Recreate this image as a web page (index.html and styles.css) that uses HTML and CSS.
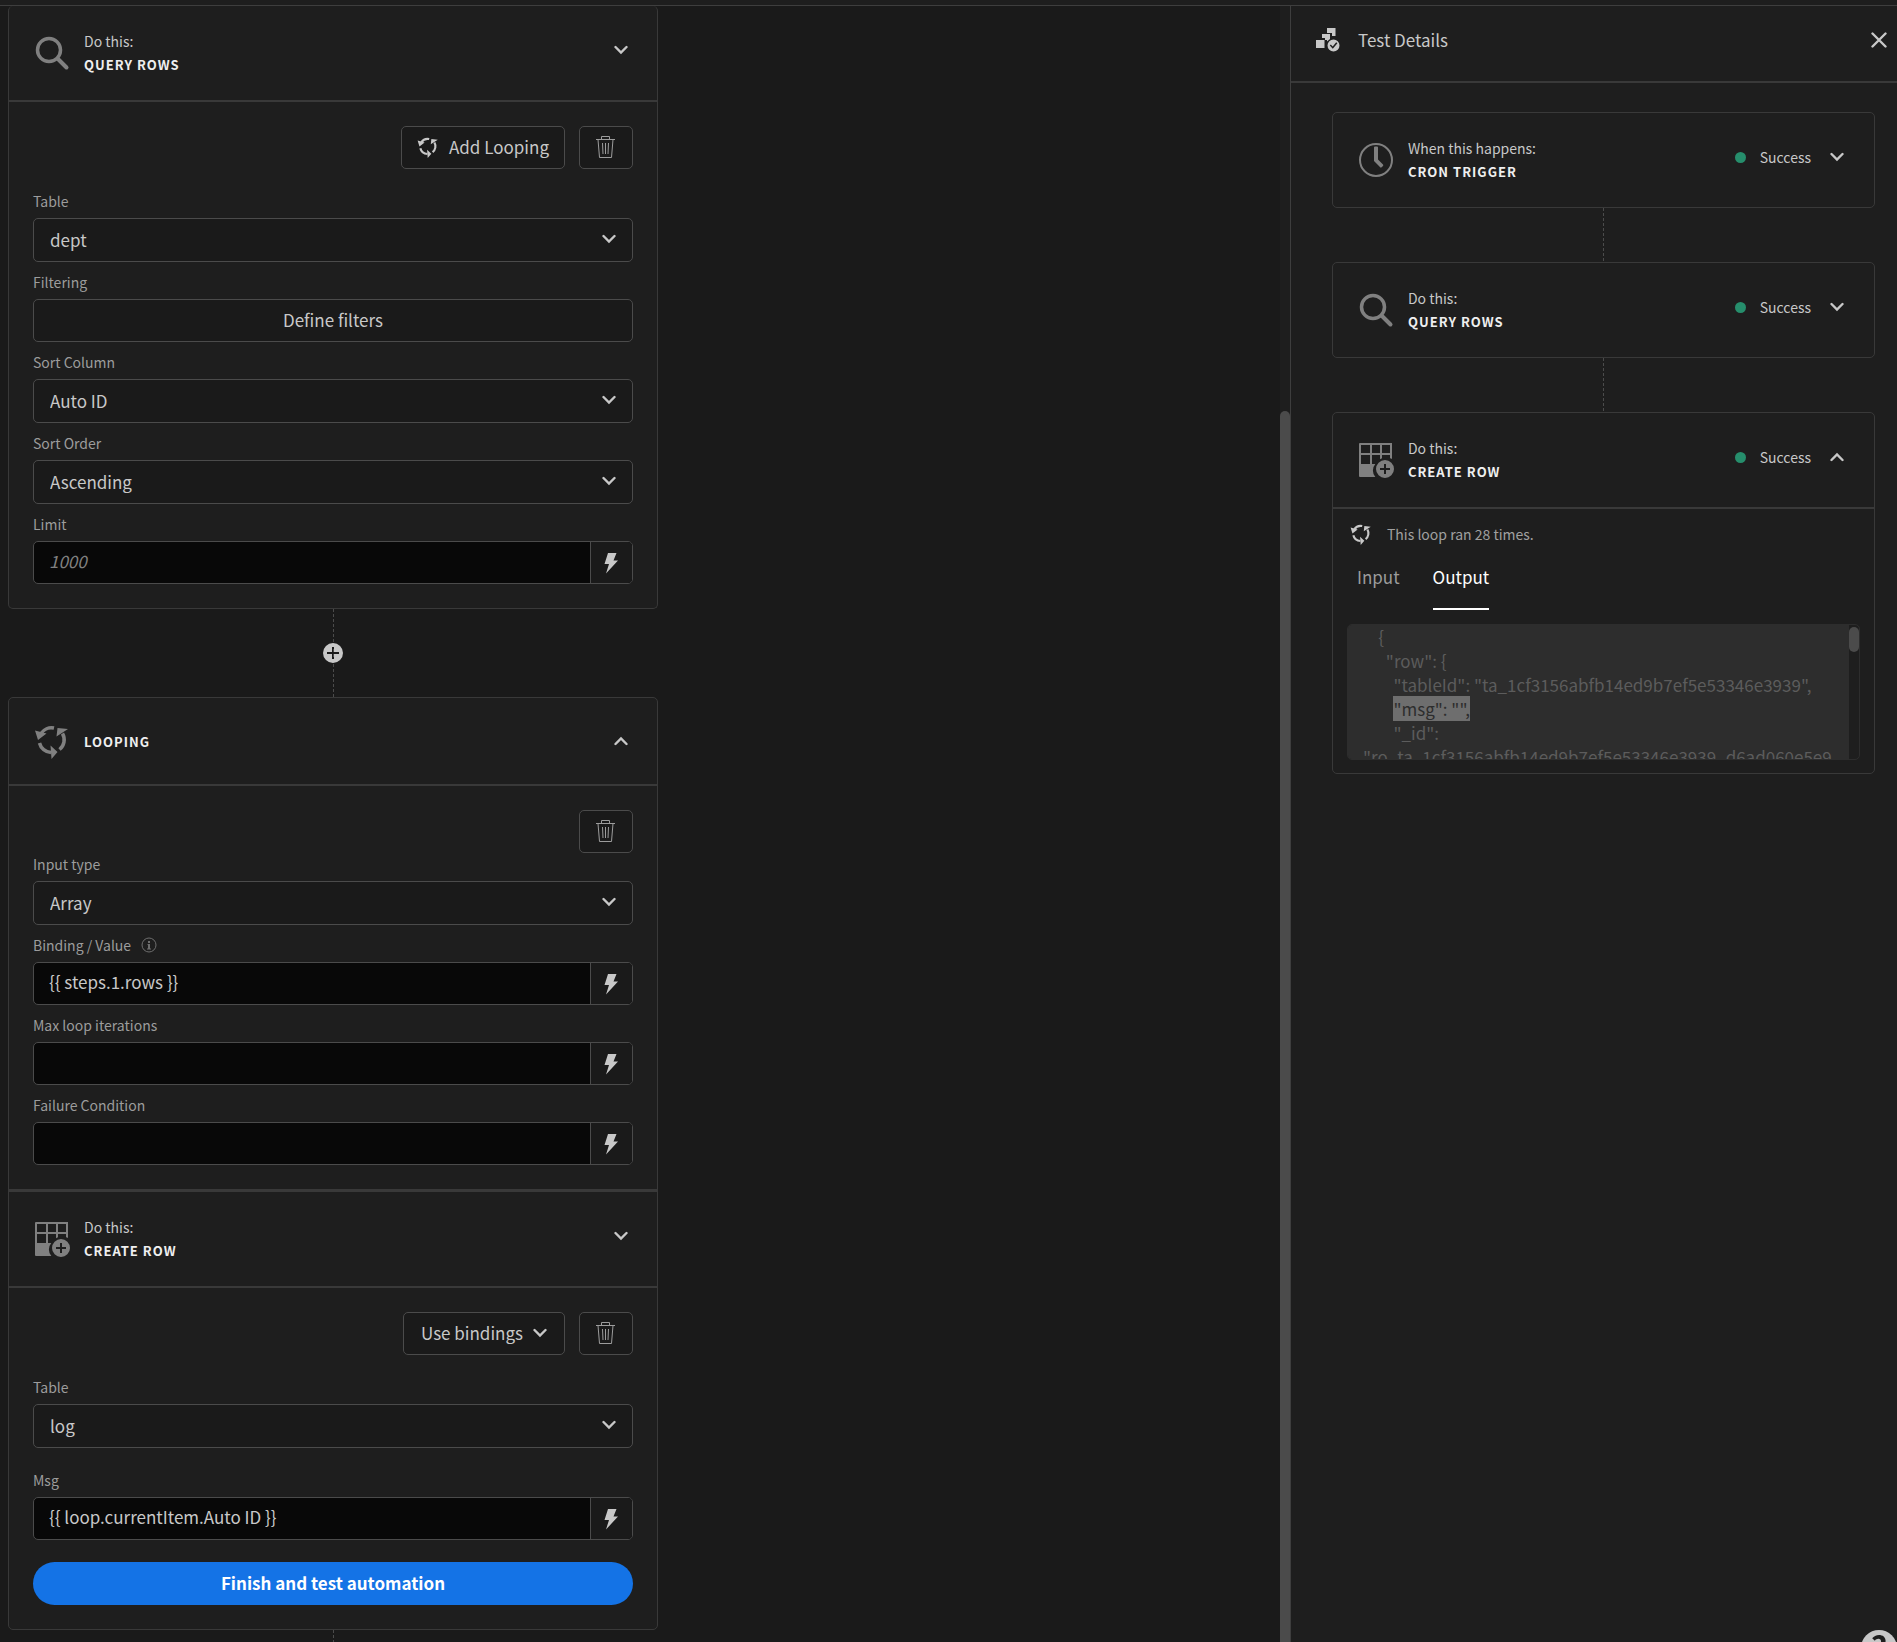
FILE: index.html
```
<!DOCTYPE html>
<html lang="en">
<head>
    <meta charset="UTF-8">
    <meta name="viewport" content="width=device-width, initial-scale=1.0">
    <title>Automation</title>
    <link rel="stylesheet" href="styles.css">
</head>
<body>
    <svg class="sprite" aria-hidden="true">
        <symbol id="icon-search" viewBox="0 0 36 36">
            <circle cx="15" cy="15" r="11.5" class="arc"/>
            <path d="M24 24l8.500 8.500" class="handle"/>
        </symbol>
        <symbol id="icon-loop" viewBox="0 0 36 36">
            <path d="M20 5A12.500 12.500 0 0 0 7 10.500" class="arc"/>
            <path d="M28.500 10.500A12.500 12.500 0 0 1 25.500 26.500" class="arc"/>
            <path d="M5.500 20A12.500 12.500 0 0 0 17 29.500" class="arc"/>
            <path d="M1 7.500L12.500 10.500 4 17zM23.500 5L34 6 22.500 13.500zM16.500 22.500L23.500 29 17.500 36z"/>
        </symbol>
        <symbol id="icon-clock" viewBox="0 0 36 36">
            <circle cx="18" cy="18" r="16" class="thin"/>
            <path d="M16 5.500a1 1 0 0 1 1-1h2a1 1 0 0 1 1 1v12l5 5a1 1 0 0 1 0 1.400l-1.400 1.400a1 1 0 0 1-1.400 0L16 19z"/>
        </symbol>
        <symbol id="icon-table-add" viewBox="0 0 36 36">
            <path fill-rule="evenodd" d="M2 1h32v16a10 10 0 0 0-2-.8V13h-8v3.200a10 10 0 0 0-2 1V13h-8v9h3.300a10 10 0 0 0 0 13H2a1 1 0 0 1-1-1V2a1 1 0 0 1 1-1zM3 3v8h9V3zM14 3v8h8V3zM24 3v8h8V3zM3 13v9h9v-9z"/>
            <path fill-rule="evenodd" d="M27 18a9 9 0 1 0 0 18 9 9 0 0 0 0-18zM26 22h2v4h4v2h-4v4h-2v-4h-4v-2h4z"/>
        </symbol>
        <symbol id="icon-trash" viewBox="0 0 20 24">
            <path d="M0 4.500h19M5.500 4.500V1.500h8v3M2 4.500L3.500 22.500h12L17 4.500M6.500 8l.5 11M9.500 8v11M12.500 8l-.5 11" class="line"/>
        </symbol>
        <symbol id="icon-chevron" viewBox="0 0 14 10">
            <path d="M1.500 2L7 7.500 12.500 2" class="stroke"/>
        </symbol>
        <symbol id="icon-bolt" viewBox="0 0 14 22">
            <path d="M4 1h8.500L9.500 8.500H14L2 21.500 5 12H.5z"/>
        </symbol>
        <symbol id="icon-close" viewBox="0 0 16 16">
            <path d="M1.500 1.500l13 13M14.500 1.500l-13 13" class="stroke"/>
        </symbol>
        <symbol id="icon-info" viewBox="0 0 16 16">
            <circle cx="8" cy="8" r="7" class="line"/>
            <path d="M7 4h2v2H7zM6.500 7H9v4.500h1v1H6v-1h1V8h-.5z"/>
        </symbol>
        <symbol id="icon-add" viewBox="0 0 20 20">
            <path fill-rule="evenodd" d="M10 0a10 10 0 1 0 0 20 10 10 0 0 0 0-20zM9 4h2v5h5v2h-5v5H9v-5H4V9h5z"/>
        </symbol>
        <symbol id="icon-test" viewBox="0 0 24 24">
            <path d="M11 0h8.500v8H16V5h-5zM6 6h8v5l-3 2.500V12H9V10H6zM0 12h8.500v8H0z"/>
            <path fill-rule="evenodd" d="M17.500 11.500a6 6 0 1 0 0 12 6 6 0 0 0 0-12zM13.800 17.500l1-1 1.900 1.900 3.500-4.200 1.200 1-4.600 5.500z"/>
        </symbol>
    </svg>

    <div class="top-bar"></div>
    <div class="layout">
        <main class="canvas">
            <section class="block">
                <header class="block-header">
                    <svg class="block-icon"><use href="#icon-search"/></svg>
                    <div class="block-title">
                        <p>Do this:</p>
                        <h2>Query Rows</h2>
                    </div>
                    <button class="toggle" aria-label="Expand"><svg><use href="#icon-chevron"/></svg></button>
                </header>
                <div class="block-body">
                    <div class="actions">
                        <button class="button"><svg class="loop"><use href="#icon-loop"/></svg>Add Looping</button>
                        <button class="button" aria-label="Delete"><svg class="trash"><use href="#icon-trash"/></svg></button>
                    </div>
                    <div class="field">
                        <label for="query-table">Table</label>
                        <div class="picker">
                            <select id="query-table"><option>dept</option></select>
                            <svg><use href="#icon-chevron"/></svg>
                        </div>
                    </div>
                    <div class="field">
                        <label for="filters">Filtering</label>
                        <button class="button wide" id="filters">Define filters</button>
                    </div>
                    <div class="field">
                        <label for="sort-column">Sort Column</label>
                        <div class="picker">
                            <select id="sort-column"><option>Auto ID</option></select>
                            <svg><use href="#icon-chevron"/></svg>
                        </div>
                    </div>
                    <div class="field">
                        <label for="sort-order">Sort Order</label>
                        <div class="picker">
                            <select id="sort-order"><option>Ascending</option><option>Descending</option></select>
                            <svg><use href="#icon-chevron"/></svg>
                        </div>
                    </div>
                    <div class="field">
                        <label for="limit">Limit</label>
                        <div class="binding">
                            <input type="text" id="limit" placeholder="1000">
                            <button aria-label="Bindings"><svg><use href="#icon-bolt"/></svg></button>
                        </div>
                    </div>
                </div>
            </section>

            <div class="connector">
                <button class="add-step" aria-label="Add step"><svg><use href="#icon-add"/></svg></button>
            </div>

            <section class="block">
                <header class="block-header short">
                    <svg class="block-icon"><use href="#icon-loop"/></svg>
                    <div class="block-title">
                        <h2>Looping</h2>
                    </div>
                    <button class="toggle open" aria-label="Collapse"><svg><use href="#icon-chevron"/></svg></button>
                </header>
                <div class="block-body">
                    <div class="actions tight">
                        <button class="button" aria-label="Delete"><svg class="trash"><use href="#icon-trash"/></svg></button>
                    </div>
                    <div class="field">
                        <label for="input-type">Input type</label>
                        <div class="picker">
                            <select id="input-type"><option>Array</option><option>String</option></select>
                            <svg><use href="#icon-chevron"/></svg>
                        </div>
                    </div>
                    <div class="field">
                        <label for="loop-value">Binding / Value <svg class="info"><use href="#icon-info"/></svg></label>
                        <div class="binding">
                            <input type="text" id="loop-value" value="{{ steps.1.rows }}">
                            <button aria-label="Bindings"><svg><use href="#icon-bolt"/></svg></button>
                        </div>
                    </div>
                    <div class="field">
                        <label for="iterations">Max loop iterations</label>
                        <div class="binding">
                            <input type="text" id="iterations">
                            <button aria-label="Bindings"><svg><use href="#icon-bolt"/></svg></button>
                        </div>
                    </div>
                    <div class="field">
                        <label for="failure">Failure Condition</label>
                        <div class="binding">
                            <input type="text" id="failure">
                            <button aria-label="Bindings"><svg><use href="#icon-bolt"/></svg></button>
                        </div>
                    </div>
                </div>
                <header class="block-header joined">
                    <svg class="block-icon"><use href="#icon-table-add"/></svg>
                    <div class="block-title">
                        <p>Do this:</p>
                        <h2>Create Row</h2>
                    </div>
                    <button class="toggle" aria-label="Expand"><svg><use href="#icon-chevron"/></svg></button>
                </header>
                <div class="block-body">
                    <div class="actions">
                        <button class="button menu">Use bindings<svg class="chevron"><use href="#icon-chevron"/></svg></button>
                        <button class="button" aria-label="Delete"><svg class="trash"><use href="#icon-trash"/></svg></button>
                    </div>
                    <div class="field spaced">
                        <label for="row-table">Table</label>
                        <div class="picker">
                            <select id="row-table"><option>log</option></select>
                            <svg><use href="#icon-chevron"/></svg>
                        </div>
                    </div>
                    <div class="field">
                        <label for="msg">Msg</label>
                        <div class="binding">
                            <input type="text" id="msg" value="{{ loop.currentItem.Auto ID }}">
                            <button aria-label="Bindings"><svg><use href="#icon-bolt"/></svg></button>
                        </div>
                    </div>
                    <button class="finish">Finish and test automation</button>
                </div>
            </section>
            <div class="connector"></div>
        </main>
        <div class="canvas-scroll"><div class="thumb"></div></div>

        <aside class="panel">
            <header class="panel-header">
                <svg class="test"><use href="#icon-test"/></svg>
                <h1>Test Details</h1>
                <button class="close" aria-label="Close"><svg><use href="#icon-close"/></svg></button>
            </header>
            <div class="results">
                <section class="result">
                    <header class="result-header">
                        <svg class="block-icon"><use href="#icon-clock"/></svg>
                        <div class="block-title">
                            <p>When this happens:</p>
                            <h2>Cron Trigger</h2>
                        </div>
                        <span class="status">Success</span>
                        <button class="toggle" aria-label="Expand"><svg><use href="#icon-chevron"/></svg></button>
                    </header>
                </section>
                <div class="link"></div>
                <section class="result">
                    <header class="result-header">
                        <svg class="block-icon"><use href="#icon-search"/></svg>
                        <div class="block-title">
                            <p>Do this:</p>
                            <h2>Query Rows</h2>
                        </div>
                        <span class="status">Success</span>
                        <button class="toggle" aria-label="Expand"><svg><use href="#icon-chevron"/></svg></button>
                    </header>
                </section>
                <div class="link"></div>
                <section class="result">
                    <header class="result-header">
                        <svg class="block-icon"><use href="#icon-table-add"/></svg>
                        <div class="block-title">
                            <p>Do this:</p>
                            <h2>Create Row</h2>
                        </div>
                        <span class="status">Success</span>
                        <button class="toggle open" aria-label="Collapse"><svg><use href="#icon-chevron"/></svg></button>
                    </header>
                    <div class="output">
                        <p class="loop-count"><svg class="loop"><use href="#icon-loop"/></svg>This loop ran 28 times.</p>
                        <div class="tabs" role="tablist">
                            <button role="tab" aria-selected="false">Input</button>
                            <button role="tab" aria-selected="true">Output</button>
                        </div>
                        <div class="json">
                            <textarea id="json-output" aria-label="Output" readonly>
    {
      "row": {
        "tableId": "ta_1cf3156abfb14ed9b7ef5e53346e3939",
        "msg": "",
        "_id": "ro_ta_1cf3156abfb14ed9b7ef5e53346e3939_d6ad060e5e9</textarea>
                            <div class="json-scroll"><div class="thumb"></div></div>
                        </div>
                    </div>
                </section>
            </div>
        </aside>
    </div>
    <button class="help" aria-label="Help">?</button>

    <script>
        const output = document.getElementById("json-output");
        const start = output.value.indexOf('"msg"');

        output.focus();
        output.setSelectionRange(start, start + '"msg": "",'.length);
        output.scrollTop = 0;
    </script>
</body>
</html>
```
FILE: styles.css
```
* {
    box-sizing: border-box;
}

body {
    margin: 0;
    height: 100vh;
    display: flex;
    flex-direction: column;
    overflow: hidden;
    background: #1e1e1e;
    color: #c8c8c8;
    font-family: "Noto Sans CJK SC", "Open Sans", sans-serif;
    font-size: 17px;
    line-height: 24px;
}

h1, h2, p {
    margin: 0;
    font-weight: normal;
}

button, input, select, textarea {
    font: inherit;
    color: inherit;
    margin: 0;
}

button {
    padding: 0;
    border: 0;
    background: none;
    cursor: pointer;
}

svg {
    display: block;
    flex: none;
    fill: currentColor;
}

.sprite {
    position: absolute;
    width: 0;
    height: 0;
}

.arc, .handle, .thin, .line, .stroke {
    fill: none;
    stroke: currentColor;
}

.arc {
    stroke-width: 3.5;
}

.handle {
    stroke-width: 4;
    stroke-linecap: round;
}

.thin {
    stroke-width: 2;
}

.line {
    stroke-width: 1;
}

.stroke {
    stroke-width: 2.4;
    stroke-linecap: round;
}

.top-bar {
    flex: none;
    height: 6px;
    border-bottom: 1px solid #3e3e3e;
}

.layout {
    flex: 1;
    min-height: 0;
    display: flex;
}

.canvas {
    flex: 1;
    min-width: 0;
    overflow: hidden;
    padding: 0 8px;
    background: #1a1a1a;
}

.canvas-scroll {
    flex: none;
    width: 10px;
    padding-top: 405px;
}

.thumb {
    height: 100%;
    border-radius: 5px 5px 0 0;
    background: #4b4b4b;
}

/* Automation blocks */

.block {
    max-width: 650px;
    border: 1px solid #393939;
    border-radius: 5px;
    background: #1e1e1e;
}

.block:first-child {
    border-top: 0;
}

.block-header {
    display: flex;
    align-items: center;
    height: 96px;
    padding: 0 29px 0 25px;
    border-bottom: 2px solid #393939;
}

.block-header.short {
    height: 88px;
}

.block-header.joined {
    height: 99px;
    border-top: 3px solid #393939;
}

.block-icon {
    width: 36px;
    height: 36px;
    color: #808080;
}

.block-title {
    flex: 1;
    padding-left: 14px;
    font-size: 14px;
    line-height: 23px;
}

.block-title h2 {
    color: #efefef;
    font-size: 13px;
    font-weight: bold;
    line-height: 23px;
    letter-spacing: 1px;
    text-transform: uppercase;
}

.toggle {
    padding-bottom: 6px;
}

.block-header.short .toggle {
    padding-bottom: 0;
}

.toggle svg {
    width: 14px;
    height: 10px;
}

.toggle.open svg {
    transform: rotate(180deg);
}

.block-body {
    padding: 24px;
}

.actions {
    display: flex;
    justify-content: flex-end;
    gap: 14px;
    margin-bottom: 24px;
}

.actions.tight {
    margin-bottom: 3px;
}

.button {
    display: flex;
    align-items: center;
    justify-content: center;
    height: 43px;
    padding: 0 15px 2px;
    border: 1px solid #4b4b4b;
    border-radius: 5px;
    background: #1a1a1a;
}

.button.wide {
    width: 100%;
}

.button.menu {
    padding: 0 17px 2px;
}

.loop {
    width: 22px;
    height: 22px;
    margin-right: 10px;
}

.trash {
    width: 22px;
    height: 24px;
    color: #9c9c9c;
}

.chevron {
    width: 14px;
    height: 10px;
    margin-left: 10px;
}

.field {
    margin-bottom: 12px;
}

.field:last-child {
    margin-bottom: 0;
}

.field.spaced {
    margin-bottom: 24px;
}

.field label {
    display: flex;
    align-items: center;
    height: 15px;
    margin-bottom: 10px;
    color: #9c9c9c;
    font-size: 14px;
}

.info {
    width: 16px;
    height: 16px;
    margin-left: 10px;
    color: #6e6e6e;
}

.picker {
    position: relative;
}

.picker select {
    display: block;
    width: 100%;
    height: 44px;
    padding: 0 16px 1px;
    border: 1px solid #4b4b4b;
    border-radius: 5px;
    background: #1a1a1a;
    appearance: none;
}

.picker svg {
    position: absolute;
    right: 17px;
    top: 16px;
    width: 14px;
    height: 10px;
    pointer-events: none;
}

.binding {
    display: flex;
    height: 43px;
    overflow: hidden;
    border: 1px solid #4b4b4b;
    border-radius: 5px;
    background: #080808;
}

.binding input {
    flex: 1;
    min-width: 0;
    padding: 0 15px 3px;
    border: 0;
    background: none;
}

.binding input::placeholder {
    color: #808080;
    font-style: italic;
}

.binding button {
    display: flex;
    align-items: center;
    justify-content: center;
    width: 42px;
    padding-right: 2px;
    border-left: 1px solid #4b4b4b;
    background: #1a1a1a;
}

.binding button svg {
    width: 14px;
    height: 22px;
}

.finish {
    display: block;
    width: 100%;
    height: 43px;
    margin-top: 22px;
    padding-bottom: 2px;
    border-radius: 22px;
    background: #1473e6;
    color: #fff;
    font-weight: bold;
}

.connector {
    display: flex;
    align-items: center;
    justify-content: center;
    max-width: 650px;
    height: 88px;
    background: repeating-linear-gradient(#4b4b4b 0 3px, transparent 3px 5px) center / 1px 100% no-repeat;
}

.add-step svg {
    width: 20px;
    height: 20px;
}

/* Test details */

.panel {
    flex: none;
    width: 32%;
    border-left: 1px solid #3e3e3e;
}

.panel-header {
    display: flex;
    align-items: center;
    height: 77px;
    padding: 0 10px 7px 25px;
    border-bottom: 2px solid #393939;
}

.test {
    width: 24px;
    height: 24px;
}

.panel-header h1 {
    flex: 1;
    padding-left: 18px;
    font-size: 17px;
}

.close svg {
    width: 16px;
    height: 16px;
}

.results {
    padding: 29px 22px 29px 41px;
}

.result {
    border: 1px solid #393939;
    border-radius: 5px;
}

.result-header {
    display: flex;
    align-items: center;
    height: 94px;
    padding: 0 30px 0 25px;
}

.status {
    display: flex;
    align-items: center;
    padding: 0 19px 6px 0;
    font-size: 14px;
}

.status::before {
    content: "";
    width: 11px;
    height: 11px;
    margin-right: 14px;
    border-radius: 50%;
    background: #268e6c;
}

.link {
    height: 54px;
    background: repeating-linear-gradient(#4b4b4b 0 3px, transparent 3px 5px) center / 1px 100% no-repeat;
}

.output {
    padding: 13px 14px;
    border-top: 2px solid #393939;
}

.loop-count {
    display: flex;
    align-items: center;
    padding-left: 3px;
    color: #a0a0a0;
    font-size: 14px;
}

.output .loop {
    margin-right: 15px;
    color: #c8c8c8;
}

.tabs {
    display: flex;
    gap: 33px;
    padding: 0 10px;
}

.tabs button {
    height: 64px;
    border-bottom: 2px solid transparent;
    color: #9c9c9c;
}

.tabs button[aria-selected="true"] {
    border-color: #fff;
    color: #fff;
}

.json {
    display: flex;
    height: 136px;
    margin-top: 14px;
    overflow: hidden;
    border: 1px solid #2d2d2d;
    border-radius: 5px;
}

.json textarea {
    flex: 1;
    min-width: 0;
    padding: 0 15px;
    border: 0;
    outline: 0;
    resize: none;
    overflow: hidden;
    background: #2d2d2d;
    color: #5c5c5c;
}

.json textarea::selection {
    background: #6e6e6e;
    color: #2d2d2d;
}

.json-scroll {
    flex: none;
    width: 10px;
    padding-top: 2px;
}

.json-scroll .thumb {
    height: 25px;
    border-radius: 5px;
}

.help {
    position: fixed;
    right: 0;
    bottom: -24px;
    width: 36px;
    height: 36px;
    padding-bottom: 4px;
    border-radius: 50%;
    background: #c8c8c8;
    color: #1e1e1e;
    font-size: 32px;
    font-weight: bold;
}
```
